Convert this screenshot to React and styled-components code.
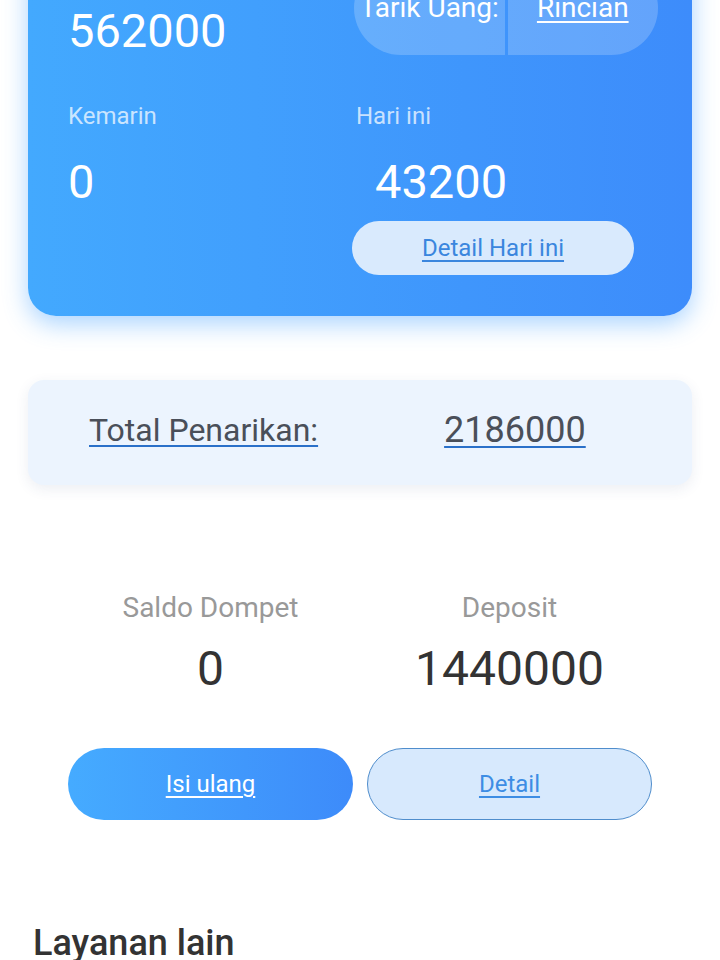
import React from "react";
import styled, { createGlobalStyle } from "styled-components";

const GlobalStyle = createGlobalStyle`
  body {
    margin: 0;
    background: #ffffff;
    font-family: Roboto, "Noto Sans", sans-serif;
    overflow: hidden;
  }
`;

const Page = styled.div`
  padding: 0 28px;
`;

const IncomeCard = styled.section`
  margin-top: -59px;
  padding: 20px 40px 41px;
  border-radius: 28px;
  background: linear-gradient(90deg, #43a9fe 0%, #3d8cfb 100%);
  box-shadow: 0 8px 24px rgba(66, 160, 255, 0.45);
  color: #ffffff;
  display: grid;
  grid-template-columns: 284px 1fr;
`;

const BigValue = styled.div`
  font-size: 47px;
  line-height: 55px;
  padding-left: ${(p) => p.$indent || 0}px;
  margin-top: ${(p) => p.$top || 0}px;
`;

const SplitPill = styled.div`
  margin-left: 2px;
  width: 304px;
  height: 94px;
  border-radius: 47px;
  overflow: hidden;
  display: grid;
  grid-template-columns: 1fr 1fr;
  gap: 3px;
`;

const PillHalf = styled.div`
  background: rgba(255, 255, 255, 0.2);
  display: flex;
  align-items: center;
  justify-content: center;
  font-size: 28px;
  line-height: 28px;
  white-space: nowrap;
  text-decoration: ${(p) => (p.$link ? "underline" : "none")};
  text-decoration-thickness: 2px;
  text-underline-offset: 4px;
`;

const SmallLabel = styled.div`
  margin-top: 44px;
  font-size: 24px;
  line-height: 28px;
  color: rgba(255, 255, 255, 0.72);
  padding-left: ${(p) => p.$indent || 0}px;
`;

const LightButton = styled.div`
  grid-column: 2;
  margin-top: 12px;
  width: 282px;
  height: 54px;
  border-radius: 27px;
  background: #d9eafd;
  color: #3a86de;
  font-size: 24px;
  display: flex;
  align-items: center;
  justify-content: center;
  text-decoration: underline;
  text-underline-offset: 4px;
`;

const TotalCard = styled.section`
  margin-top: 64px;
  height: 105px;
  box-sizing: border-box;
  padding: 0 0 6px 61px;
  border-radius: 16px;
  background: #ecf4fe;
  box-shadow: 0 4px 14px rgba(40, 70, 120, 0.09);
  display: flex;
  align-items: center;
  gap: 126px;
  color: #4a4f59;
`;

const TotalText = styled.span`
  font-size: ${(p) => p.$size}px;
  text-decoration: underline;
  text-decoration-color: #2a70c9;
  text-decoration-thickness: 2px;
  text-underline-offset: 4px;
`;

const WalletGrid = styled.section`
  margin: 106px 40px 0;
  display: grid;
  grid-template-columns: 1fr 1fr;
  column-gap: 14px;
  text-align: center;
`;

const WalletLabel = styled.div`
  font-size: 28px;
  line-height: 33px;
  color: #999999;
`;

const WalletValue = styled.div`
  margin-top: 17px;
  font-size: 48px;
  line-height: 56px;
  color: #333333;
`;

const ActionButton = styled.div`
  margin-top: 51px;
  height: 72px;
  box-sizing: border-box;
  border-radius: 36px;
  display: flex;
  align-items: center;
  justify-content: center;
  font-size: 24px;
  text-decoration: underline;
  text-underline-offset: 4px;
  background: ${(p) =>
    p.$primary ? "linear-gradient(90deg, #45abff 0%, #3d8bfa 100%)" : "#d7e9fd"};
  border: ${(p) => (p.$primary ? "none" : "1px solid #4f8dcc")};
  color: ${(p) => (p.$primary ? "#ffffff" : "#3d8de4")};
`;

const SectionTitle = styled.h2`
  margin: 102px 0 0 5px;
  font-size: 36px;
  line-height: 42px;
  font-weight: 500;
  color: #333333;
`;

export default function App() {
  return (
    <>
      <GlobalStyle />
      <Page>
        <IncomeCard>
          <BigValue $top={42}>562000</BigValue>
          <SplitPill>
            <PillHalf>Tarik Uang:</PillHalf>
            <PillHalf $link>Rincian</PillHalf>
          </SplitPill>
          <SmallLabel>Kemarin</SmallLabel>
          <SmallLabel $indent={4}>Hari ini</SmallLabel>
          <BigValue $top={24}>0</BigValue>
          <BigValue $top={24} $indent={23}>
            43200
          </BigValue>
          <LightButton>Detail Hari ini</LightButton>
        </IncomeCard>

        <TotalCard>
          <TotalText $size={32}>Total Penarikan:</TotalText>
          <TotalText $size={36}>2186000</TotalText>
        </TotalCard>

        <WalletGrid>
          <WalletLabel>Saldo Dompet</WalletLabel>
          <WalletLabel>Deposit</WalletLabel>
          <WalletValue>0</WalletValue>
          <WalletValue>1440000</WalletValue>
          <ActionButton $primary>Isi ulang</ActionButton>
          <ActionButton>Detail</ActionButton>
        </WalletGrid>

        <SectionTitle>Layanan lain</SectionTitle>
      </Page>
    </>
  );
}
